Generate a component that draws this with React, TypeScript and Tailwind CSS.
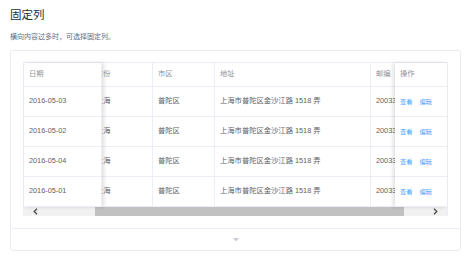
import React from "react";

const dates = ["2016-05-03", "2016-05-02", "2016-05-04", "2016-05-01"];

const cellBase = "h-[30px] border-b border-[#ebeef5] flex items-center px-[5px] whitespace-nowrap overflow-hidden";
const headBase = "h-[24px] border-b border-[#ebeef5] flex items-center px-[5px] whitespace-nowrap overflow-hidden text-[#909399]";

function Column({ title, values, width, last }: { title: string; values: string[]; width: string; last?: boolean }) {
  return (
    <div className={`${width} shrink-0 flex flex-col ${last ? "" : "border-r border-[#ebeef5]"}`}>
      <div className={headBase}>{title}</div>
      {values.map((v, i) => (
        <div key={i} className={cellBase}>{v}</div>
      ))}
    </div>
  );
}

function Chevron({ dir }: { dir: "left" | "right" }) {
  return (
    <svg width="5" height="7" viewBox="0 0 5 7">
      {dir === "left" ? (
        <polyline points="4,0.8 1.2,3.5 4,6.2" fill="none" stroke="#505050" strokeWidth="1.4" />
      ) : (
        <polyline points="1,0.8 3.8,3.5 1,6.2" fill="none" stroke="#505050" strokeWidth="1.4" />
      )}
    </svg>
  );
}

export default function App() {
  const four = (s: string) => [s, s, s, s];
  return (
    <div className="w-[474px] h-[257px] bg-white pt-[7px] px-[10px] font-['Liberation_Sans','Noto_Sans_CJK_SC',sans-serif] overflow-hidden">
      <h2 className="text-[11.5px] leading-[16px] text-[#1f2f3d] font-normal">固定列</h2>
      <p className="mt-[9px] text-[7px] leading-[10px] text-[#5e6d82]">横向内容过多时，可选择固定列。</p>
      <div className="mt-[8px] w-[451px] border border-[#ebebeb] rounded-[3px]">
        <div className="pt-[11px] px-[12px] pb-[12px]">
          <div className="w-[425px] border-l border-r border-t border-[#ebeef5] text-[7.3px] text-[#606266]">
            <div className="flex">
              {/* fixed left */}
              <div className="relative z-10 w-[78px] shrink-0 bg-white shadow-[2px_0_4px_rgba(0,0,0,0.13)]">
                <Column title="日期" values={dates} width="w-[78px]" />
              </div>
              {/* scrollable middle */}
              <div className="relative w-[293px] shrink-0 overflow-hidden">
                <div className="flex ml-[-73px]">
                  <Column title="姓名" values={four("王小虎")} width="w-[62px]" />
                  <Column title="省份" values={four("上海")} width="w-[62px]" />
                  <Column title="市区" values={four("普陀区")} width="w-[62px]" />
                  <Column title="地址" values={four("上海市普陀区金沙江路 1518 弄")} width="w-[156px]" />
                  <Column title="邮编" values={four("200333")} width="w-[62px]" />
                  <Column title="" values={four("")} width="w-[52px]" last />
                </div>
              </div>
              {/* fixed right */}
              <div className="relative z-10 w-[52px] shrink-0 bg-white shadow-[-2px_0_4px_rgba(0,0,0,0.13)] flex flex-col">
                <div className={headBase}>操作</div>
                {dates.map((d) => (
                  <div key={d} className={cellBase}>
                    <span className="text-[6.2px] text-[#409eff]">查看</span>
                    <span className="ml-[7px] text-[6.2px] text-[#409eff]">编辑</span>
                  </div>
                ))}
              </div>
            </div>
            {/* scrollbar */}
            <div className="flex h-[9px] bg-[#f1f1f1]">
              <div className="w-[23px] shrink-0 flex items-center justify-center">
                <Chevron dir="left" />
              </div>
              <div className="flex-1 flex pl-[48px] pr-[20px]">
                <div className="flex-1 bg-[#c1c1c1]" />
              </div>
              <div className="w-[23px] shrink-0 flex items-center justify-center">
                <Chevron dir="right" />
              </div>
            </div>
          </div>
        </div>
        <div className="h-[22px] border-t border-[#eaeefb] flex items-center justify-center">
          <svg width="6" height="4" viewBox="0 0 6 4" className="ml-[1px]">
            <polygon points="0,0 6,0 3,3.5" fill="#c8ccd3" />
          </svg>
        </div>
      </div>
    </div>
  );
}
